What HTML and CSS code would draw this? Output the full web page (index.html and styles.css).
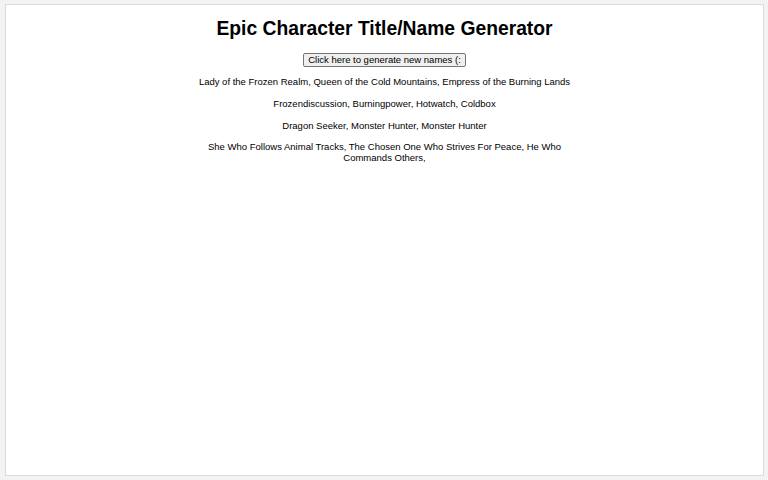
FILE: index.html
```html
<!DOCTYPE html>
<html>
<head>
<meta charset="utf-8">
<title>Epic Character Title/Name Generator</title>
<link rel="stylesheet" href="styles.css">
</head>
<body>
<div class="page">
  <h1 class="title">Epic Character Title/Name Generator</h1>
  <div class="actions">
    <button class="gen-btn" type="button">Click here to generate new names (:</button>
  </div>
  <div class="results">
    <p>Lady of the Frozen Realm, Queen of the Cold Mountains, Empress of the Burning Lands</p>
    <p>Frozendiscussion, Burningpower, Hotwatch, Coldbox</p>
    <p>Dragon Seeker, Monster Hunter, Monster Hunter</p>
    <p>She Who Follows Animal Tracks, The Chosen One Who Strives For Peace, He Who Commands Others,</p>
  </div>
</div>
</body>
</html>
```
FILE: styles.css
```css
html, body {
  margin: 0;
  padding: 0;
  height: 100%;
}
body {
  background: #f3f3f3;
  font-family: "Liberation Sans", Arial, sans-serif;
  color: #000;
  padding: 4px 4px 4px 5px;
  box-sizing: border-box;
}
.page {
  background: #fff;
  border: 1px solid #dcdcdc;
  height: 100%;
  box-sizing: border-box;
  text-align: center;
  padding-top: 14px;
}
.title {
  font-size: 19.3px;
  font-weight: bold;
  margin: 0 0 14px;
  line-height: 20px;
}
.actions {
  display: flex;
  justify-content: center;
  margin-bottom: 9px;
}
.gen-btn {
  font-family: "Liberation Sans", Arial, sans-serif;
  font-size: 9.5px;
  line-height: 10px;
  height: 14px;
  padding: 1px 4px;
  background: #efefef;
  border: 1px solid #767676;
  border-radius: 2px;
  color: #000;
}
.results {
  width: 380px;
  margin: 0 auto;
  font-size: 9.5px;
  line-height: 11px;
}
.results p {
  margin: 0 0 10.8px;
}
```
